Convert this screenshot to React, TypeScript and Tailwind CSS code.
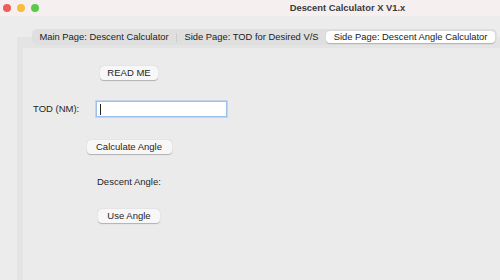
const MacButton = ({ label, width }: { label: string; width: string }) => (
  <button
    className={`${width} h-[14px] rounded-[4px] bg-[#f7f7f7] shadow-[0_0.5px_1px_rgba(0,0,0,0.25)] text-[9.5px] leading-[14px] text-[#1f1f1f] text-center`}
  >
    {label}
  </button>
);

export default function App() {
  return (
    <div className="w-[500px] h-[280px] overflow-hidden bg-[#ececec] font-['Liberation_Sans',Arial,sans-serif] text-[#1f1f1f]">
      {/* title bar */}
      <div className="h-[16px] bg-[#f6efef] flex items-center relative">
        <div className="flex gap-[6px] pl-[3px]">
          <span className="w-[8px] h-[8px] rounded-full bg-[#ee5e57]" />
          <span className="w-[8px] h-[8px] rounded-full bg-[#f5be3b]" />
          <span className="w-[8px] h-[8px] rounded-full bg-[#5bc84a]" />
        </div>
        <div className="flex-1 text-center pl-[156px] text-[9.4px] font-bold text-[#3a3a3a] whitespace-nowrap">
          Descent Calculator X V1.x
        </div>
      </div>

      <div className="pl-[17px]">
        {/* tab bar */}
        <div className="relative z-10 ml-[15px] mt-[13px] w-[465px] h-[16px] rounded-[5px] bg-[#dfdfdf] flex items-center text-[9.4px] text-[#222] whitespace-nowrap">
          <div className="w-[144px] text-center">Main Page: Descent Calculator</div>
          <div className="w-px h-[9px] bg-[#cdcdcd]" />
          <div className="w-[149px] text-center">Side Page: TOD for Desired V/S</div>
          <div className="w-[169px] h-[12px] rounded-[4px] bg-white shadow-[0_0.5px_1px_rgba(0,0,0,0.2)] flex items-center justify-center">
            Side Page: Descent Angle Calculator
          </div>
        </div>

        {/* tab pane */}
        <div className="-mt-[8px] h-[250px] bg-[#e4e4e4] pl-[6px] pt-[11px]">
          <div className="h-full bg-[#ebebeb] text-[9.5px]">
            <div className="w-[212px] flex justify-center pt-[18px]">
              <MacButton label="READ ME" width="w-[58px]" />
            </div>

            <div className="flex items-center mt-[21px] pl-[10px]">
              <span className="w-[63px]">TOD (NM):</span>
              <div className="w-[131px] h-[16px] bg-white border border-[#9dbef0] shadow-[0_0_0_1px_rgba(130,170,235,0.35)] flex items-center pl-[3px]">
                <span className="w-px h-[11px] bg-[#222]" />
              </div>
            </div>

            <div className="w-[212px] flex justify-center mt-[23px]">
              <MacButton label="Calculate Angle" width="w-[85px]" />
            </div>

            <div className="pl-[74px] mt-[21px] h-[14px] leading-[14px]">Descent Angle:</div>

            <div className="w-[212px] flex justify-center mt-[20px]">
              <MacButton label="Use Angle" width="w-[62px]" />
            </div>
          </div>
        </div>
      </div>
    </div>
  );
}
